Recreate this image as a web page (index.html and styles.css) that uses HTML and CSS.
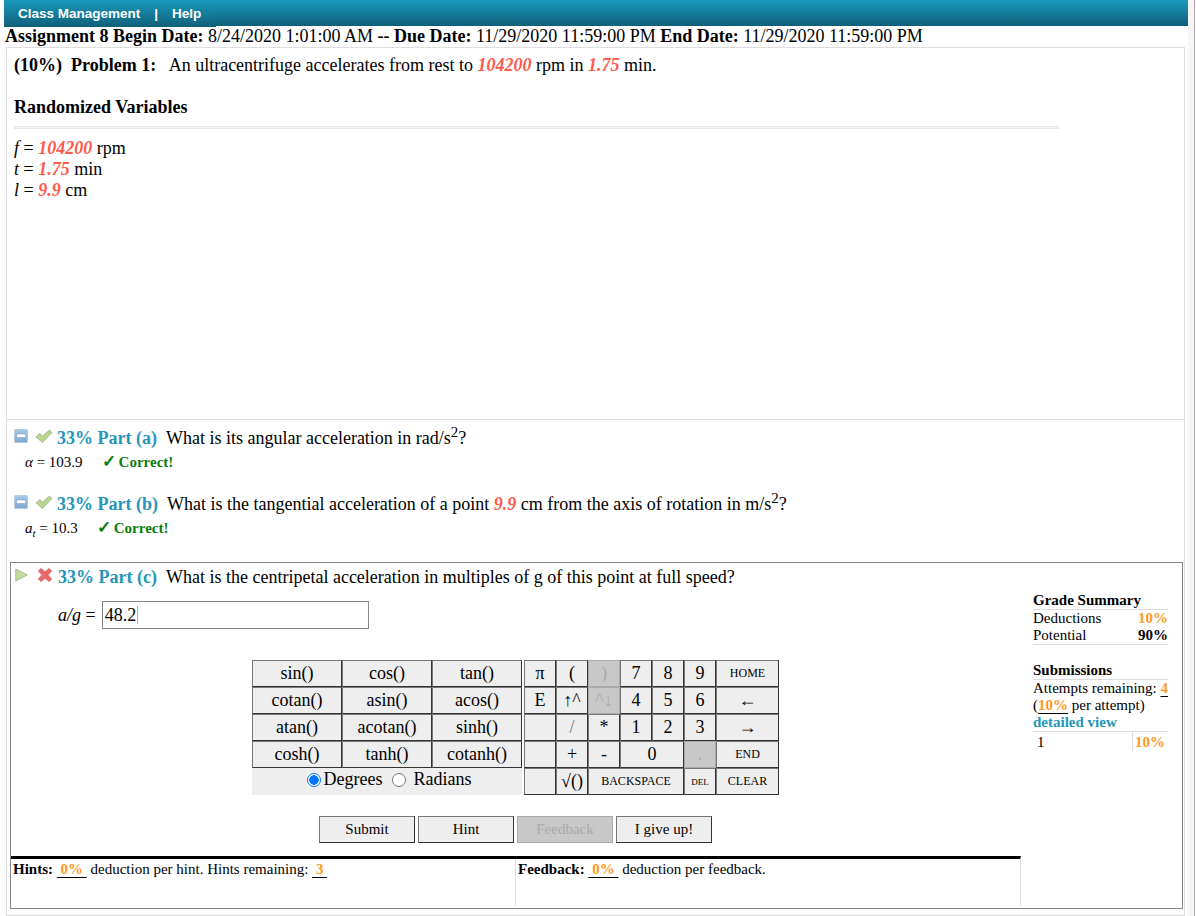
FILE: index.html
```html
<!DOCTYPE html>
<html lang="en">
<head>
    <meta charset="UTF-8">
    <title>Assignment 8</title>
    <link rel="stylesheet" href="styles.css">
</head>
<body>
    <svg class="defs" width="0" height="0">
        <linearGradient id="blueFill" x1="0" y1="0" x2="0" y2="1">
            <stop offset="0" stop-color="#a9c9e6"/>
            <stop offset="1" stop-color="#7da7d0"/>
        </linearGradient>
    </svg>
    <div class="page">
        <nav class="topbar">
            <div class="menu">
                <span>Class Management</span>
                <span>|</span>
                <span>Help</span>
            </div>
        </nav>
        <div class="assignment">
            <b>Assignment 8 Begin Date:</b> 8/24/2020 1:01:00 AM <b>-- Due Date:</b> 11/29/2020 11:59:00 PM <b>End Date:</b> 11/29/2020 11:59:00 PM
        </div>

        <div class="problem">
            <div class="statement">
                <p class="prompt"><b>(10%)&nbsp; Problem 1:</b>&nbsp;&nbsp; An ultracentrifuge accelerates from rest to <i class="rand">104200</i> rpm in <i class="rand">1.75</i> min.</p>
                <h3>Randomized Variables</h3>
                <hr>
                <div class="vars">
                    <div><i>f</i> = <i class="rand">104200</i> rpm</div>
                    <div><i>t</i> = <i class="rand">1.75</i> min</div>
                    <div><i>l</i> = <i class="rand">9.9</i> cm</div>
                </div>
            </div>

            <div class="part first">
                <div class="part-head">
                    <svg class="ico" viewBox="0 0 14 14"><rect x=".5" y=".5" width="13" height="13" rx="1" fill="url(#blueFill)" stroke="#b4cbe0"/><rect x="2.5" y="5" width="9" height="3.5" fill="#fff" stroke="#6f93b5" stroke-width=".5"/></svg>
                    <svg class="ico tick" viewBox="0 0 18 14"><path d="M1 8 L4.5 4.5 L7.5 7 L14.5 1 L17 3.5 L7.5 13.5 Z" fill="#b9d68f" stroke="#a3ad98" stroke-width=".8"/></svg>
                    <b class="part-name">33% Part (a)</b>
                    <span>What is its angular acceleration in rad/s<sup>2</sup>?</span>
                </div>
                <div class="answer"><span><i>&alpha;</i> = 103.9</span><b class="correct"><span class="mark">&#10003;</span>Correct!</b></div>
            </div>

            <div class="part second">
                <div class="part-head">
                    <svg class="ico" viewBox="0 0 14 14"><rect x=".5" y=".5" width="13" height="13" rx="1" fill="url(#blueFill)" stroke="#b4cbe0"/><rect x="2.5" y="5" width="9" height="3.5" fill="#fff" stroke="#6f93b5" stroke-width=".5"/></svg>
                    <svg class="ico tick" viewBox="0 0 18 14"><path d="M1 8 L4.5 4.5 L7.5 7 L14.5 1 L17 3.5 L7.5 13.5 Z" fill="#b9d68f" stroke="#a3ad98" stroke-width=".8"/></svg>
                    <b class="part-name">33% Part (b)</b>
                    <span>What is the tangential acceleration of a point <i class="rand">9.9</i> cm from the axis of rotation in m/s<sup>2</sup>?</span>
                </div>
                <div class="answer"><span><i>a<sub>t</sub></i> = 10.3</span><b class="correct"><span class="mark">&#10003;</span>Correct!</b></div>
            </div>

            <div class="active">
                <div class="work">
                    <div class="part-head">
                        <svg class="ico play" viewBox="0 0 13 14"><path d="M.8 1 L12.2 7 L.8 13 Z" fill="#c3dc9c" stroke="#a8b896"/></svg>
                        <svg class="ico cross" viewBox="0 0 16 16"><path d="M4 1 L8 4.5 L12 1 L15 4 L11.5 8 L15 12 L12 15 L8 11.5 L4 15 L1 12 L4.5 8 L1 4 Z" fill="#e8686a" stroke="#e3a9a9"/></svg>
                        <b class="part-name">33% Part (c)</b>
                        <span>What is the centripetal acceleration in multiples of g of this point at full speed?</span>
                    </div>
                    <div class="entry">
                        <span><i>a/g</i> =</span>
                        <div class="entry-box">48.2<span class="caret"></span></div>
                    </div>

                    <div class="keypad">
                        <div class="funcs">
                            <div class="func-grid">
                                <button>sin()</button><button>cos()</button><button>tan()</button>
                                <button>cotan()</button><button>asin()</button><button>acos()</button>
                                <button>atan()</button><button>acotan()</button><button>sinh()</button>
                                <button>cosh()</button><button>tanh()</button><button>cotanh()</button>
                            </div>
                            <div class="units">
                                <span class="radio on"></span><span>Degrees</span>
                                <span class="radio"></span><span>Radians</span>
                            </div>
                        </div>
                        <div class="keys">
                            <button>&pi;</button><button>(</button><button class="off">)</button><button>7</button><button>8</button><button>9</button><button class="small">HOME</button>
                            <button>E</button><button>&uarr;^</button><button class="off">^&darr;</button><button>4</button><button>5</button><button>6</button><button>&larr;</button>
                            <button></button><button class="light">/</button><button>*</button><button>1</button><button>2</button><button>3</button><button>&rarr;</button>
                            <button></button><button>+</button><button>-</button><button class="span2">0</button><button class="off">.</button><button class="small">END</button>
                            <button></button><button>&radic;()</button><button class="span3 small">BACKSPACE</button><button class="tiny">DEL</button><button class="small">CLEAR</button>
                        </div>
                    </div>

                    <div class="actions">
                        <button>Submit</button>
                        <button>Hint</button>
                        <button class="off">Feedback</button>
                        <button>I give up!</button>
                    </div>

                    <div class="notes">
                        <div><b>Hints:</b> <u class="pct">&nbsp;0%&nbsp;</u> deduction per hint. Hints remaining: <u class="pct">&nbsp;3&nbsp;</u></div>
                        <div><b>Feedback:</b> <u class="pct">&nbsp;0%&nbsp;</u> deduction per feedback.</div>
                    </div>
                </div>

                <aside class="summary">
                    <div class="sum-title">Grade Summary</div>
                    <div class="sum-row"><span>Deductions</span><b class="orange">10%</b></div>
                    <div class="sum-row last"><span>Potential</span><b>90%</b></div>
                    <div class="sum-title later">Submissions</div>
                    <div class="sum-text">Attempts remaining: <u class="pct">4</u><br>(<u class="pct">10%</u> per attempt)<br><b class="detail">detailed view</b></div>
                    <div class="sum-log"><span>1</span><b class="orange">10%</b></div>
                </aside>
            </div>
        </div>
    </div>
    <div class="edge"></div>
</body>
</html>
```

FILE: styles.css
```css
* {
    box-sizing: border-box;
}

body {
    margin: 0;
    height: 916px;
    overflow: hidden;
    display: flex;
    background: #fff;
    color: #000;
    font-family: "Liberation Serif", "Times New Roman", serif;
    font-size: 18px;
}

.defs {
    display: block;
    flex: none;
}

.page {
    width: 1188px;
    flex: none;
}

/* Strip down the right side of the window */
.edge {
    width: 7px;
    height: 916px;
    flex: none;
    background: #f5f5f5;
    border-right: 1px solid #aaa;
}

/* Top menu */
.topbar {
    margin-left: 4px;
    height: 26px;
    background: linear-gradient(#1a9abd, #0f5f78);
}

.menu {
    width: 212px;
    height: 27px;
    padding: 6px 0 0 14px;
    display: flex;
    gap: 14px;
    background: linear-gradient(#1a9abd, #0f5f78);
    color: #fff;
    font-family: "Liberation Sans", Arial, sans-serif;
    font-size: 13.5px;
    font-weight: bold;
    line-height: 16px;
    white-space: nowrap;
}

.assignment {
    margin-left: 5px;
    height: 21px;
    line-height: 21px;
    white-space: nowrap;
}

/* Problem box */
.problem {
    margin-left: 6px;
    width: 1179px;
    height: 869px;
    border: 1px solid #ddd;
}

.statement {
    height: 372px;
    padding: 7px 7px 0;
    border-bottom: 1px solid #ddd;
}

.prompt {
    margin: 0;
    line-height: 20px;
}

h3 {
    margin: 22px 0 0;
    font-size: 18px;
    line-height: 20px;
}

hr {
    width: 1045px;
    height: 3px;
    margin: 9px 0 0;
    border: 1px solid #e6e6e6;
    background: #f4f4f4;
}

.vars {
    margin-top: 9px;
    line-height: 21px;
}

.rand {
    color: #ff5a4d;
    font-weight: bold;
}

.part {
    padding-left: 7px;
}

.part.first {
    padding-top: 7px;
    height: 73px;
}

.part.second {
    height: 69px;
}

.part-head {
    display: flex;
    align-items: center;
    height: 22px;
    white-space: nowrap;
}

.part-head sup {
    font-size: 15px;
    line-height: 0;
}

.ico {
    width: 14px;
    height: 14px;
    margin-top: -5px;
    flex: none;
}

.tick {
    width: 18px;
    margin-left: 7px;
}

.part-name {
    margin: 0 9px 0 4px;
    color: #2596b8;
}

.answer {
    display: flex;
    margin: 4px 0 0 11px;
    gap: 19px;
    font-size: 15px;
    line-height: 18px;
}

.answer sub {
    font-size: 11px;
    line-height: 0;
}

.correct {
    color: #0a7d0a;
}

.mark {
    margin-right: 3px;
    font-size: 17px;
    line-height: 0;
}

/* Part being worked on */
.active {
    display: flex;
    height: 347px;
    margin-left: 3px;
    width: 1173px;
    border: 1px solid #888;
}

.work {
    width: 1010px;
    flex: none;
}

.work .part-head {
    margin: 3px 0 0 4px;
}

.play {
    width: 13px;
}

.cross {
    width: 16px;
    height: 16px;
    margin-left: 9px;
}

.work .part-name {
    margin-left: 5px;
}

.entry {
    display: flex;
    align-items: center;
    gap: 6px;
    margin: 13px 0 0 47px;
}

.entry-box {
    width: 267px;
    height: 28px;
    padding: 0 2px;
    display: flex;
    align-items: center;
    border: 1px solid #888;
}

.caret {
    width: 1px;
    height: 18px;
    margin-left: 1px;
    background: #f48fb1;
}

/* Keypad */
.keypad {
    display: flex;
    align-items: flex-start;
    margin: 31px 0 0 241px;
}

button {
    margin: 0;
    padding: 0;
    background: #eee;
    border: 1px solid;
    border-color: #777 #333 #333 #777;
    border-radius: 0;
    color: #000;
    font-family: "Liberation Serif", "Times New Roman", serif;
    font-size: 18px;
    white-space: nowrap;
}

.funcs {
    width: 270px;
    background: #eee;
}

.func-grid {
    display: grid;
    grid-template-columns: 90px 90px 90px;
    grid-auto-rows: 27px;
}

.units {
    height: 27px;
    padding: 0 0 4px 4px;
    display: flex;
    align-items: center;
    justify-content: center;
}

.radio {
    width: 14px;
    height: 14px;
    margin: 0 7px 0 10px;
    border: 1px solid #777;
    border-radius: 50%;
    background: #fff;
}

.radio.on {
    margin: 0 3px 0 0;
    border: 1.5px solid #0075ff;
    background: radial-gradient(circle, #0075ff 0 4.5px, #fff 5px);
}

.keys {
    display: grid;
    grid-template-columns: repeat(6, 32px) 63px;
    grid-auto-rows: 27px;
    margin-left: 2px;
}

.keys .span2 {
    grid-column: span 2;
}

.keys .span3 {
    grid-column: span 3;
}

.keys .small {
    font-size: 12px;
}

.keys .tiny {
    font-size: 9px;
}

.keys .light {
    color: #777;
}

button.off {
    background: #c8c8c8;
    border-color: #aaa;
    color: #aaa;
}

.actions {
    display: flex;
    gap: 3px;
    margin: 21px 0 0 308px;
}

.actions button {
    width: 96px;
    height: 27px;
    font-size: 15px;
}

/* Hints and feedback */
.notes {
    display: flex;
    height: 50px;
    margin-top: 13px;
    border-top: 3px solid #000;
    border-right: 1px solid #ddd;
    font-size: 15px;
    line-height: 17px;
}

.notes div {
    padding: 2px 0 0 2px;
}

.notes div:first-child {
    width: 505px;
    border-right: 1px solid #ddd;
}

.pct {
    color: #ff9922;
    font-weight: bold;
    text-decoration-color: #000;
    text-underline-offset: 3px;
}

/* Right column */
.summary {
    width: 135px;
    margin: 29px 0 0 12px;
    font-size: 15px;
    line-height: 17px;
}

.sum-title {
    font-weight: bold;
    border-bottom: 1px solid #ddd;
}

.sum-title.later {
    margin-top: 17px;
}

.sum-row {
    display: flex;
    justify-content: space-between;
}

.sum-row.last {
    border-bottom: 1px solid #ddd;
}

.orange {
    color: #ff9922;
}

.detail {
    color: #2596b8;
}

.sum-text {
    white-space: nowrap;
}

.sum-log {
    display: flex;
    justify-content: space-between;
    padding-left: 4px;
    border-top: 1px solid #ddd;
}

.sum-log span,
.sum-log b {
    padding-top: 2px;
}

.sum-log b {
    width: 36px;
    padding-left: 2px;
    border-left: 1px solid #ddd;
}
```
